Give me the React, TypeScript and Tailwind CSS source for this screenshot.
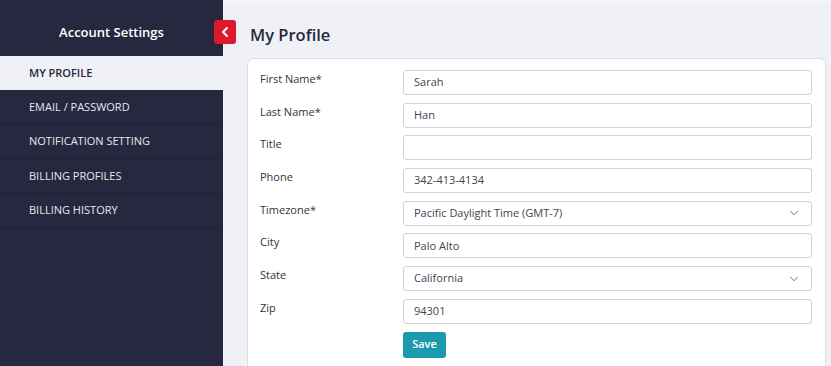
import { ChevronDown, ChevronLeft } from "lucide-react";

const navItems = ["MY PROFILE", "EMAIL / PASSWORD", "NOTIFICATION SETTING", "BILLING PROFILES", "BILLING HISTORY"];

type Field = { label: string; value: string; select?: boolean };

const fields: Field[] = [
    { label: "First Name*", value: "Sarah" },
    { label: "Last Name*", value: "Han" },
    { label: "Title", value: "" },
    { label: "Phone", value: "342-413-4134" },
    { label: "Timezone*", value: "Pacific Daylight Time (GMT-7)", select: true },
    { label: "City", value: "Palo Alto" },
    { label: "State", value: "California", select: true },
    { label: "Zip", value: "94301" },
];

export default function App() {
    return (
        <div className="flex h-[366px] w-[831px] overflow-hidden bg-[#f0f1f6] font-['Open_Sans',sans-serif]">
            <aside className="relative w-[223px] shrink-0 bg-[#262840]">
                <div className="flex h-[56px] items-center justify-center pt-[9px] text-[13px] font-semibold text-white">
                    Account Settings
                </div>
                <button className="absolute left-[214px] top-[20px] flex h-[24px] w-[22px] items-center justify-center rounded-[3px] bg-[#dc1a2e] text-white">
                    <ChevronLeft className="h-4 w-4" strokeWidth={3} />
                </button>
                <nav>
                    {navItems.map((item, i) => (
                        <div
                            key={item}
                            className={
                                i === 0
                                    ? "flex h-[34px] items-center bg-[#f0f1f6] pl-[29px] text-[11px] font-semibold text-[#262840]"
                                    : "flex h-[34.5px] items-center border-b border-[#1f2136] pl-[29px] text-[11px] text-[#e6e6ee]"
                            }
                        >
                            {item}
                        </div>
                    ))}
                </nav>
            </aside>

            <main className="flex-1 border-t-[3px] border-[#f4f4f6] pl-[24px] pr-[5px]">
                <h1 className="mt-[20px] h-[35px] pl-[3px] text-[16.5px] font-semibold text-[#262840]">My Profile</h1>
                <div className="rounded-t-[7px] border border-[#dcdde3] bg-white pb-[20px] pl-[12px] pr-[13px] pt-[11px]">
                    <div className="flex flex-col gap-[7.7px]">
                        {fields.map((f) => (
                            <div key={f.label} className="flex">
                                <label className="w-[143px] shrink-0 pt-[1px] text-[11px] text-[#333340]">{f.label}</label>
                                <div className="flex h-[25px] flex-1 items-center justify-between rounded-[3px] border border-[#cfd2da] px-[10px] text-[11px] text-[#444450]">
                                    <span>{f.value}</span>
                                    {f.select && <ChevronDown className="h-3.5 w-3.5 text-[#666]" strokeWidth={1.5} />}
                                </div>
                            </div>
                        ))}
                        <div className="flex">
                            <div className="w-[143px] shrink-0" />
                            <button className="h-[26px] w-[43px] rounded-[3px] bg-[#1a9aad] text-[11px] font-semibold text-white">
                                Save
                            </button>
                        </div>
                    </div>
                </div>
            </main>
        </div>
    );
}
